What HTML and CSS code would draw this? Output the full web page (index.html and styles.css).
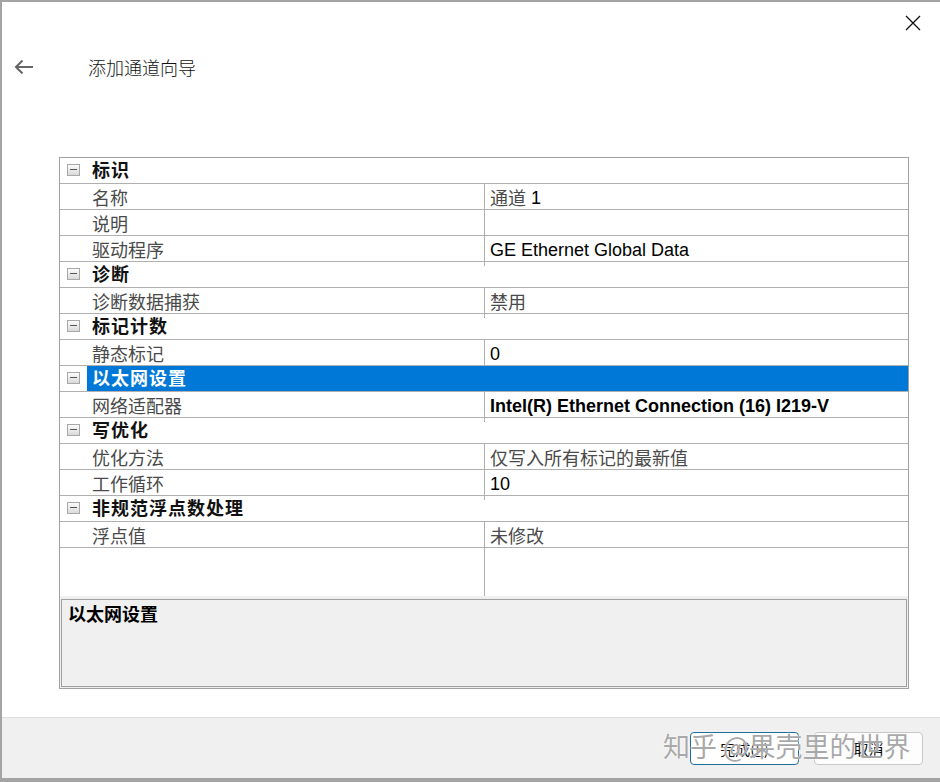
FILE: index.html
```html
<!DOCTYPE html>
<html lang="zh-CN">
<head>
<meta charset="utf-8">
<title>添加通道向导</title>
<link rel="stylesheet" href="styles.css">
</head>
<body>
<div class="dialog">
  <div class="top">
    <svg class="close" width="16" height="16" viewBox="0 0 16 16"><path d="M1 1 L15 15 M15 1 L1 15" stroke="#111" stroke-width="1.3" fill="none"/></svg>
  </div>
  <div class="header">
    <svg class="back" width="20" height="16" viewBox="0 0 20 16"><path d="M19 8 H2 M8.5 1.5 L2 8 L8.5 14.5" stroke="#666" stroke-width="2" fill="none"/></svg>
    <span class="title">添加通道向导</span>
  </div>
  <div class="content">
    <div class="pg">
      <div class="grid">
        <div class="cat"><span class="tog"></span><span class="cat-name">标识</span></div>
        <div class="prop"><span class="name">名称</span><span class="val"><span class="cn">通道</span><span> 1</span></span></div>
        <div class="prop"><span class="name">说明</span><span class="val"></span></div>
        <div class="prop"><span class="name">驱动程序</span><span class="val">GE Ethernet Global Data</span></div>
        <div class="cat"><span class="tog"></span><span class="cat-name">诊断</span></div>
        <div class="prop"><span class="name">诊断数据捕获</span><span class="val cn">禁用</span></div>
        <div class="cat"><span class="tog"></span><span class="cat-name">标记计数</span></div>
        <div class="prop"><span class="name">静态标记</span><span class="val">0</span></div>
        <div class="cat sel"><span class="tog"></span><span class="cat-name">以太网设置</span></div>
        <div class="prop"><span class="name">网络适配器</span><span class="val bold">Intel(R) Ethernet Connection (16) I219-V</span></div>
        <div class="cat"><span class="tog"></span><span class="cat-name">写优化</span></div>
        <div class="prop"><span class="name">优化方法</span><span class="val cn">仅写入所有标记的最新值</span></div>
        <div class="prop"><span class="name">工作循环</span><span class="val">10</span></div>
        <div class="cat"><span class="tog"></span><span class="cat-name">非规范浮点数处理</span></div>
        <div class="prop"><span class="name">浮点值</span><span class="val cn">未修改</span></div>
        <div class="filler"><span class="name"></span><span class="val"></span></div>
      </div>
      <div class="desc">以太网设置</div>
    </div>
  </div>
  <div class="footer">
    <button class="btn default">完成(<u>F</u>)</button>
    <button class="btn">取消</button>
    <span class="watermark">知乎 @果壳里的世界</span>
  </div>
</div>
</body>
</html>
```

FILE: styles.css
```css
* { box-sizing: border-box; }
html, body { margin: 0; padding: 0; }
body {
  width: 940px;
  height: 782px;
  background: #a4a4a4;
  overflow: hidden;
  font-family: "Liberation Sans", "Noto Sans CJK SC", sans-serif;
}
.dialog {
  margin: 2px 0 0 2px;
  width: 938px;
  height: 776px;
  background: #fff;
  display: flex;
  flex-direction: column;
}
.top {
  height: 41px;
  display: flex;
  justify-content: flex-end;
  padding: 13px 19px 0 0;
}
.close { display: block; }
.header {
  height: 48px;
  display: flex;
  align-items: center;
  padding-left: 12px;
}
.back { display: block; margin-right: 54px; }
.title {
  font-family: "Noto Sans CJK SC", sans-serif;
  font-size: 18px;
  color: #111;
  font-weight: 300;
}
.content {
  padding: 66px 31px 0 57px;
}
.pg {
  border: 1px solid #a0a0a0;
  height: 532px;
  background: #f0f0f0;
  display: flex;
  flex-direction: column;
}
.grid {
  background: #fff;
  height: 438px;
}
.cat, .prop {
  height: 26px;
  border-bottom: 1px solid #b0b0b0;
  font-size: 18px;
}
.cat {
  display: flex;
  align-items: stretch;
}
.tog {
  width: 13px;
  height: 12px;
  margin: 6px 7px 0 7px;
  border: 1px solid #a8a8a8;
  background: linear-gradient(#fbfbfb, #dadada);
  position: relative;
}
.tog::after {
  content: "";
  position: absolute;
  left: 2px;
  right: 2px;
  top: 4px;
  height: 1px;
  background: #555;
}
.cat-name {
  flex: 1;
  display: flex;
  align-items: center;
  padding: 0 0 3px 5px;
  font-family: "Noto Sans CJK SC", sans-serif;
  font-weight: bold;
  letter-spacing: 1px;
  color: #111;
}
.cat.sel .cat-name {
  background: #0078d7;
  color: #fff;
}
.prop, .filler {
  display: grid;
  grid-template-columns: 425px 1fr;
}
.name {
  border-right: 1px solid #b0b0b0;
  padding: 0 0 4px 32px;
  display: flex;
  align-items: center;
  font-family: "Noto Sans CJK SC", sans-serif;
  color: #4a4a4a;
}
.val {
  padding: 0 0 1px 5px;
  display: flex;
  align-items: center;
  color: #000;
  white-space: pre;
}
.cn, .val.cn {
  font-family: "Noto Sans CJK SC", sans-serif;
  color: #4a4a4a;
}
.val .cn { padding-bottom: 3px; }
.val.cn { padding-bottom: 4px; }
.val.bold { font-weight: bold; }
.filler { height: 48px; }
.desc {
  margin: 3px 1px 1px 1px;
  height: 88px;
  border: 1px solid #a0a0a0;
  background: #f0f0f0;
  padding: 0 0 0 6px;
  font-family: "Noto Sans CJK SC", sans-serif;
  font-weight: bold;
  font-size: 18px;
  line-height: 26px;
  color: #000;
}
.footer {
  margin-top: auto;
  height: 61px;
  border-top: 1px solid #dcdcdc;
  background: #f0f0f0;
  display: flex;
  justify-content: flex-end;
  align-items: center;
  gap: 15px;
  padding-right: 17px;
  position: relative;
}
.btn {
  height: 33px;
  width: 109px;
  border: 1px solid #c8c8c8;
  border-radius: 4px;
  background: #fdfdfd;
  font-family: "Noto Sans CJK SC", sans-serif;
  font-size: 15px;
  color: #000;
  padding: 0;
}
.btn.default {
  border: 1px solid #1f6f9a;
  background: #fff;
}
.btn u { text-decoration: underline; }
.watermark {
  position: absolute;
  left: 661px;
  top: 8px;
  font-family: "Noto Sans CJK SC", sans-serif;
  font-size: 27px;
  color: rgba(140, 140, 140, 0.75);
  text-shadow: 0 0 2px #fff, 0 0 1px #fff;
  white-space: nowrap;
  pointer-events: none;
}
```
